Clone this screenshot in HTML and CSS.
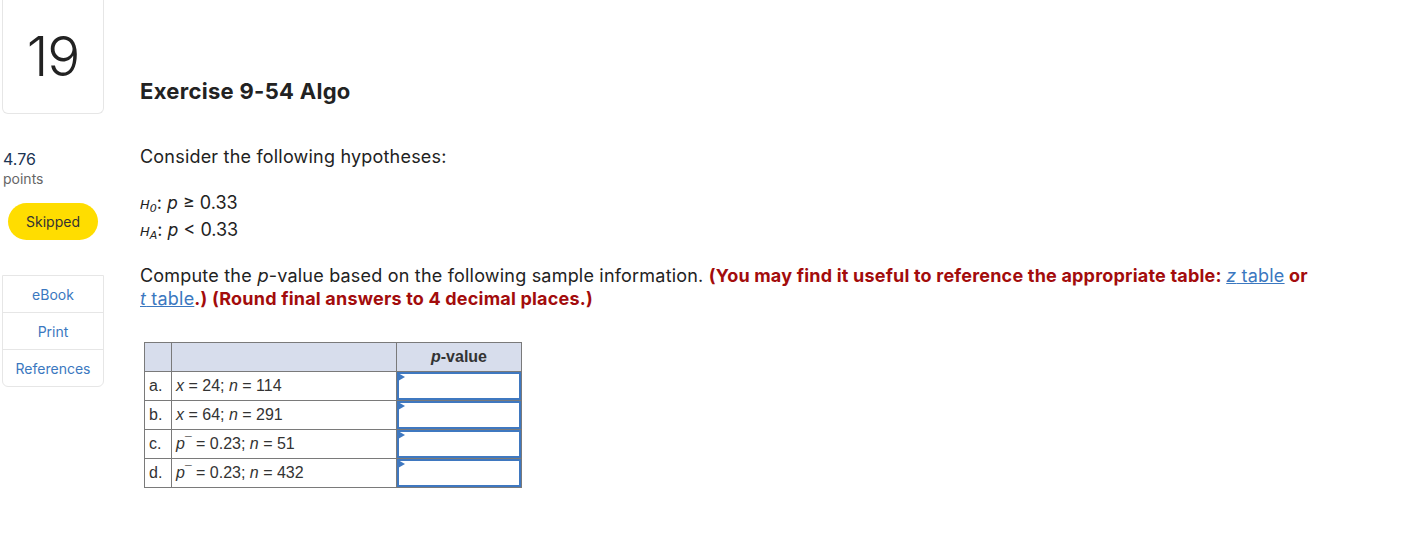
FILE: index.html
```html
<!DOCTYPE html>
<html>
<head>
<meta charset="utf-8">
<link rel="stylesheet" href="styles.css">
</head>
<body>
<div class="page">
  <aside class="side">
    <div class="qnum">19</div>
    <div class="points">
      <div class="pts-val">4.76</div>
      <div class="pts-label">points</div>
    </div>
    <div class="status">Skipped</div>
    <nav class="tools">
      <div class="tool">eBook</div>
      <div class="tool">Print</div>
      <div class="tool">References</div>
    </nav>
  </aside>
  <main class="main">
    <h1 class="title">Exercise 9-54 Algo</h1>
    <p class="intro">Consider the following hypotheses:</p>
    <div class="hyp">
      <div><i class="hv">H<sub>0</sub></i>: <i class="pv">p</i> ≥ 0.33</div>
      <div><i class="hv">H<sub>A</sub></i>: <i class="pv">p</i> &lt; 0.33</div>
    </div>
    <p class="task">Compute the <i class="pi">p</i>-value based on the following sample information. <b class="red">(You may find it useful to reference the appropriate table: <a class="lnk" href="#"><i>z</i> table</a> or <a class="lnk" href="#"><i>t</i> table</a>.) (Round final answers to 4 decimal places.)</b></p>
    <table class="grid">
      <tr class="head">
        <th class="c1"></th>
        <th class="c2"></th>
        <th class="c3"><i>p</i>-value</th>
      </tr>
      <tr>
        <td class="c1">a.</td>
        <td class="c2"><i>x</i> = 24; <i>n</i> = 114</td>
        <td class="c3 inp"><div class="box"></div></td>
      </tr>
      <tr>
        <td class="c1">b.</td>
        <td class="c2"><i>x</i> = 64; <i>n</i> = 291</td>
        <td class="c3 inp"><div class="box"></div></td>
      </tr>
      <tr>
        <td class="c1">c.</td>
        <td class="c2"><i>p</i><span class="bar">¯</span> = 0.23; <i>n</i> = 51</td>
        <td class="c3 inp"><div class="box"></div></td>
      </tr>
      <tr>
        <td class="c1">d.</td>
        <td class="c2"><i>p</i><span class="bar">¯</span> = 0.23; <i>n</i> = 432</td>
        <td class="c3 inp"><div class="box"></div></td>
      </tr>
    </table>
  </main>
</div>
</body>
</html>
```
FILE: styles.css
```css
html, body {
  margin: 0;
  padding: 0;
  background: #fff;
}
body {
  font-family: Inter, "Open Sans", sans-serif;
  color: #222;
}
.page {
  display: flex;
  align-items: flex-start;
}
.side {
  width: 102px;
  margin-left: 2px;
  flex: none;
  display: flex;
  flex-direction: column;
}
.qnum {
  border: 1px solid #e6e6e6;
  border-top: none;
  border-radius: 0 0 6px 6px;
  box-sizing: border-box;
  height: 114px;
  display: flex;
  align-items: center;
  justify-content: center;
  font-family: Inter, sans-serif;
  font-weight: 300;
  font-size: 55px;
  color: #222;
  letter-spacing: -1px;
  padding-bottom: 2px;
}
.points {
  margin-top: 35px;
  padding-left: 1px;
}
.pts-val {
  font-size: 16px;
  color: #1c3553;
  line-height: 20px;
}
.pts-label {
  font-size: 14px;
  color: #666;
  line-height: 20px;
}
.status {
  margin: 14px 0 0 6px;
  width: 90px;
  height: 37px;
  border-radius: 19px;
  background: #ffdd00;
  color: #333;
  font-size: 14px;
  display: flex;
  align-items: center;
  justify-content: center;
}
.tools {
  margin-top: 35px;
  border: 1px solid #e6e6e6;
  border-radius: 0 0 6px 6px;
}
.tool {
  height: 36px;
  display: flex;
  align-items: center;
  justify-content: center;
  font-size: 14px;
  color: #3b78c0;
  border-top: 1px solid #e6e6e6;
}
.tool:first-child {
  border-top: none;
}
.main {
  margin-left: 36px;
  padding-top: 77px;
  flex: 1;
}
.title {
  margin: 0;
  font-size: 22px;
  font-weight: 700;
  line-height: 28px;
  letter-spacing: 0.3px;
  color: #222;
}
.intro {
  margin: 40px 0 0;
  font-size: 18px;
  letter-spacing: 0.2px;
  line-height: 24px;
}
.hyp {
  margin-top: 21px;
  font-size: 18px;
  line-height: 25px;
}
.hv {
  font-family: "DejaVu Sans", sans-serif;
  font-size: 13px;
}
.hv sub {
  font-size: 11px;
  vertical-align: -3px;
  line-height: 0;
}
.pv {
  font-family: "DejaVu Sans", sans-serif;
  font-size: 17px;
}
.pi {
  font-family: "DejaVu Sans", sans-serif;
}
.task {
  margin: 20px 0 0;
  font-size: 18px;
  letter-spacing: 0.2px;
  line-height: 23px;
  max-width: 1185px;
}
.red {
  color: #a30c0c;
  font-weight: 700;
}
.lnk {
  color: #3b78c0;
  font-weight: 400;
  white-space: nowrap;
}
.grid {
  margin: 32px 0 0 4px;
  border-collapse: collapse;
  font-family: "Liberation Sans", Arial, sans-serif;
  font-size: 16px;
  letter-spacing: 0;
  color: #333;
}
.grid th, .grid td {
  border: 1px solid #7a7a7a;
  height: 28px;
  padding: 0;
}
.grid .head th {
  background: #d7ddec;
  font-weight: 700;
  height: 28px;
}
.c1 {
  width: 22px;
  padding-left: 4px !important;
  text-align: left;
}
.c2 {
  width: 220px;
  padding-left: 4px !important;
}
.c3 {
  width: 124px;
}
.inp {
  position: relative;
}
.box {
  height: 24px;
  border: 2px solid #3f78c0;
  background: #fff;
  position: relative;
}
.box::before {
  content: "";
  position: absolute;
  left: -1px;
  top: -1px;
  border-left: 7px solid #3f78c0;
  border-top: 4px solid transparent;
  border-bottom: 4px solid transparent;
}
.bar {
  font-size: 12px;
  vertical-align: 3px;
}
```
